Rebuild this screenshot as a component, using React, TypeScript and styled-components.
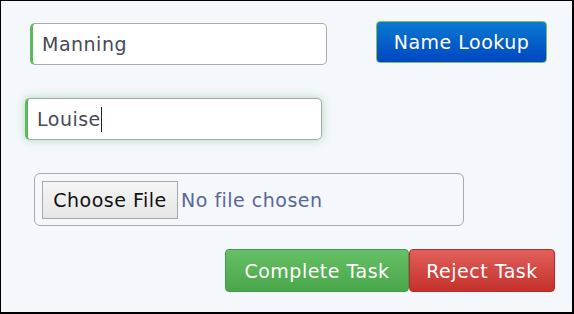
import React from "react";
import styled, { createGlobalStyle } from "styled-components";

const Global = createGlobalStyle`
  html, body { margin: 0; padding: 0; background: #fff; }
  * { box-sizing: border-box; }
`;

const Frame = styled.div`
  width: 574px;
  height: 314px;
  border-style: solid;
  border-color: #000;
  border-width: 1px 2px 2px 1px;
  background: #f4f7fc;
  font-family: "DejaVu Sans", sans-serif;
  font-size: 19px;
  letter-spacing: 0.5px;
  display: flex;
  flex-direction: column;
`;

const Row = styled.div<{ $top: number; $left: number }>`
  display: flex;
  align-items: flex-start;
  margin-top: ${(p) => p.$top}px;
  padding-left: ${(p) => p.$left}px;
`;

const TextInput = styled.div<{ $focused?: boolean; $offset?: number }>`
  width: 297px;
  height: 42px;
  margin-top: ${(p) => p.$offset ?? 0}px;
  background: #fff;
  border: 1px solid #aaa;
  border-left: 3px solid #5cb85c;
  border-radius: 5px;
  display: flex;
  align-items: center;
  padding-left: 9px;
  color: #474a57;
  box-shadow: ${(p) => (p.$focused ? "0 0 8px rgba(92, 184, 92, 0.45)" : "none")};
`;

const Caret = styled.span`
  display: inline-block;
  width: 1px;
  height: 25px;
  background: #222;
`;

const LookupButton = styled.button`
  margin-left: 49px;
  width: 171px;
  height: 42px;
  border: 1px solid #7cc35a;
  border-radius: 4px;
  background: linear-gradient(#0a7ad0, #0046c2);
  color: #fff;
  font: inherit;
  letter-spacing: inherit;
  padding: 0;
`;

const FileBox = styled.div`
  width: 430px;
  height: 53px;
  border: 1px solid #aaa;
  border-radius: 6px;
  display: flex;
  align-items: center;
  padding-left: 7px;
  gap: 3px;
`;

const ChooseButton = styled.div`
  width: 136px;
  height: 38px;
  border: 1px solid #a9a9a9;
  background: linear-gradient(#f5f5f5, #e6e6e6);
  display: flex;
  align-items: center;
  justify-content: center;
  color: #111;
`;

const NoFile = styled.span`
  color: #5a6798;
`;

const Actions = styled.div`
  display: flex;
  justify-content: flex-end;
  padding-right: 17px;
  margin-top: 23px;
`;

const ActionButton = styled.button<{ $tone: "green" | "red"; $w: number }>`
  width: ${(p) => p.$w}px;
  height: 43px;
  border-radius: 4px;
  border: 1px solid ${(p) => (p.$tone === "green" ? "#449d44" : "#b52b27")};
  background: ${(p) =>
    p.$tone === "green"
      ? "linear-gradient(#66c066, #4aa64a)"
      : "linear-gradient(#e2605b, #c4302b)"};
  color: #fff;
  font: inherit;
  letter-spacing: inherit;
  padding: 0;
`;

export default function App() {
  return (
    <>
      <Global />
      <Frame>
        <Row $top={20} $left={29}>
          <TextInput $offset={2}>Manning</TextInput>
          <LookupButton>Name Lookup</LookupButton>
        </Row>
        <Row $top={33} $left={24}>
          <TextInput $focused>
            Louise
            <Caret />
          </TextInput>
        </Row>
        <Row $top={33} $left={33}>
          <FileBox>
            <ChooseButton>Choose File</ChooseButton>
            <NoFile>No file chosen</NoFile>
          </FileBox>
        </Row>
        <Actions>
          <ActionButton $tone="green" $w={184}>Complete Task</ActionButton>
          <ActionButton $tone="red" $w={146}>Reject Task</ActionButton>
        </Actions>
      </Frame>
    </>
  );
}
